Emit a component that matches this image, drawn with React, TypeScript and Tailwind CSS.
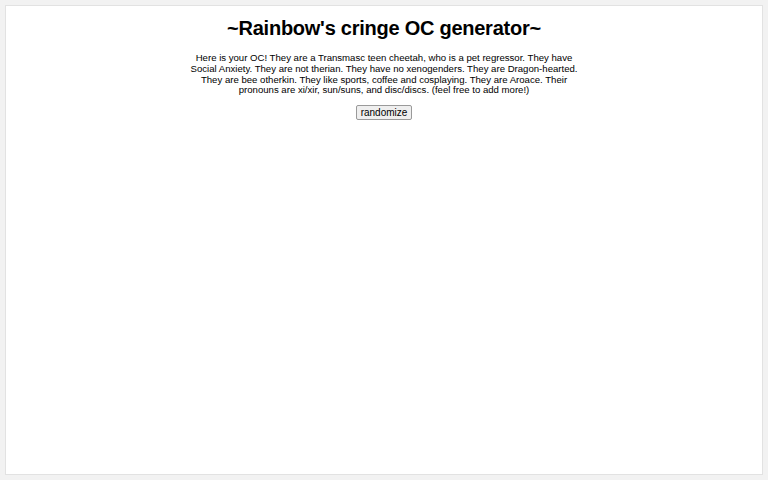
export default function App() {
  return (
    <div
      className="min-h-[480px] bg-[#f2f2f2] p-[5px] flex"
      style={{ fontFamily: '"Liberation Sans", Arial, sans-serif' }}
    >
      <div className="flex-1 bg-white border border-[#e2e2e2] flex flex-col items-center text-black">
        <h1 className="mt-[10px] text-[20px] leading-[24px] font-bold tracking-[-0.25px]">~Rainbow's cringe OC generator~</h1>
        <p className="mt-[13px] w-[400px] text-center text-[9.6px] leading-[10.8px]">
          Here is your OC! They are a Transmasc teen cheetah, who is a pet regressor. They have Social Anxiety. They are not therian. They have no xenogenders. They are Dragon-hearted. They are bee otherkin. They like sports, coffee and cosplaying. They are Aroace. Their pronouns are xi/xir, sun/suns, and disc/discs. (feel free to add more!)
        </p>
        <button className="mt-[9px] px-[4px] h-[15px] text-[10px] leading-[12px] bg-[#efefef] border border-[#9a9a9a] rounded-[2px]">
          randomize
        </button>
      </div>
    </div>
  );
}
